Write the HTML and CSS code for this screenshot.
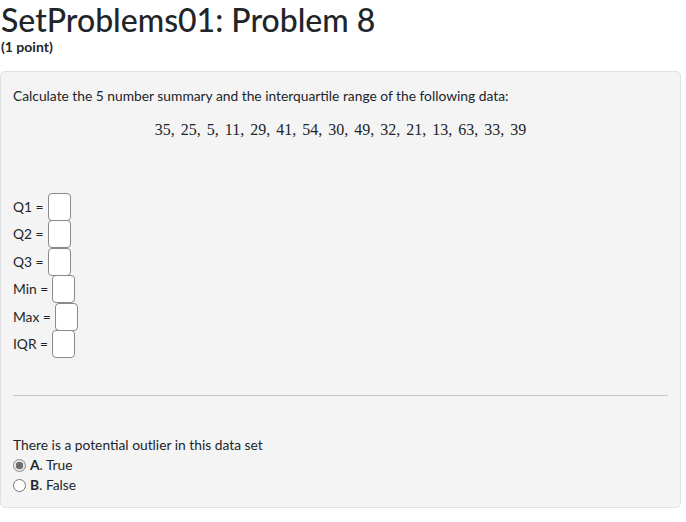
FILE: index.html
```html
<!DOCTYPE html>
<html lang="en">
<head>
  <meta charset="UTF-8" />
  <title>SetProblems01: Problem 8</title>
  <link rel="stylesheet" href="styles.css">
</head>
<body>
  <div class="problem-header">
    <h2 class="problem-title">SetProblems01: Problem 8</h2>
    <div class="problem-value">(1 point)</div>
  </div>

  <div class="problem-card">
    <p class="intro">Calculate the 5 number summary and the interquartile range of the following data:</p>
    <div class="math-display">35, 25, 5, 11, 29, 41, 54, 30, 49, 32, 21, 13, 63, 33, 39</div>

    <div class="answers">
      <div class="answer-row"><label>Q1 =</label> <input class="answer-box" type="text"></div>
      <div class="answer-row"><label>Q2 =</label> <input class="answer-box" type="text"></div>
      <div class="answer-row"><label>Q3 =</label> <input class="answer-box" type="text"></div>
      <div class="answer-row"><label>Min =</label> <input class="answer-box" type="text"></div>
      <div class="answer-row"><label>Max =</label> <input class="answer-box" type="text"></div>
      <div class="answer-row"><label>IQR =</label> <input class="answer-box" type="text"></div>
    </div>

    <hr class="divider">

    <div class="question">There is a potential outlier in this data set</div>
    <label class="choice"><input type="radio" name="outlier" checked> <b>A</b>. True</label>
    <label class="choice"><input type="radio" name="outlier"> <b>B</b>. False</label>
  </div>
</body>
</html>
```

FILE: styles.css
```css
/* page */
body {
  margin: 0;
  font-family: Lato, "Noto Sans", sans-serif;
  font-size: 13.8px;
  color: #212529;
  background: #fff;
}

/* header */
.problem-header {
  padding: 0 0 0 1px;
}
.problem-title {
  margin: 0;
  font-size: 32px;
  font-weight: 500;
  line-height: 38px;
  padding-top: 1px;
}
.problem-value {
  font-size: 14px;
  font-weight: bold;
  line-height: 16px;
  margin-top: 0;
}

/* card */
.problem-card {
  margin: 16px 5px 0 0;
  padding: 14px 12px 12px 12px;
  line-height: 20px;
  background: #f4f4f4;
  border: 1px solid #e2e2e2;
  border-radius: 5px;
}
.intro {
  margin: 0 0 14px 0;
}
.math-display {
  text-align: center;
  font-family: "Liberation Serif", serif;
  font-size: 16px;
  word-spacing: 2px;
  margin-bottom: 53px;
}

/* answer blanks */
.answers {
  display: flex;
  flex-direction: column;
}
.answer-row {
  display: flex;
  align-items: center;
  gap: 4px;
  height: 27.5px;
}
.answer-box {
  width: 23px;
  height: 28px;
  box-sizing: border-box;
  padding: 0;
  border: 1px solid #8a8a8a;
  border-radius: 4px;
  background: #fff;
}

.divider {
  margin: 37px 0 39px 0;
  border: none;
  border-top: 1px solid #c6c6c6;
}

/* multiple choice */
.choice {
  display: flex;
  align-items: center;
  height: 20px;
}
.choice input {
  appearance: none;
  margin: 0 4px 0 0;
  width: 13px;
  height: 13px;
  border: 1px solid #767676;
  border-radius: 50%;
  background: #fff;
}
.choice input:checked {
  background: radial-gradient(circle, #6e6e6e 0 3.5px, #e6e6e6 4px);
  border-color: #8a8a8a;
}
```
